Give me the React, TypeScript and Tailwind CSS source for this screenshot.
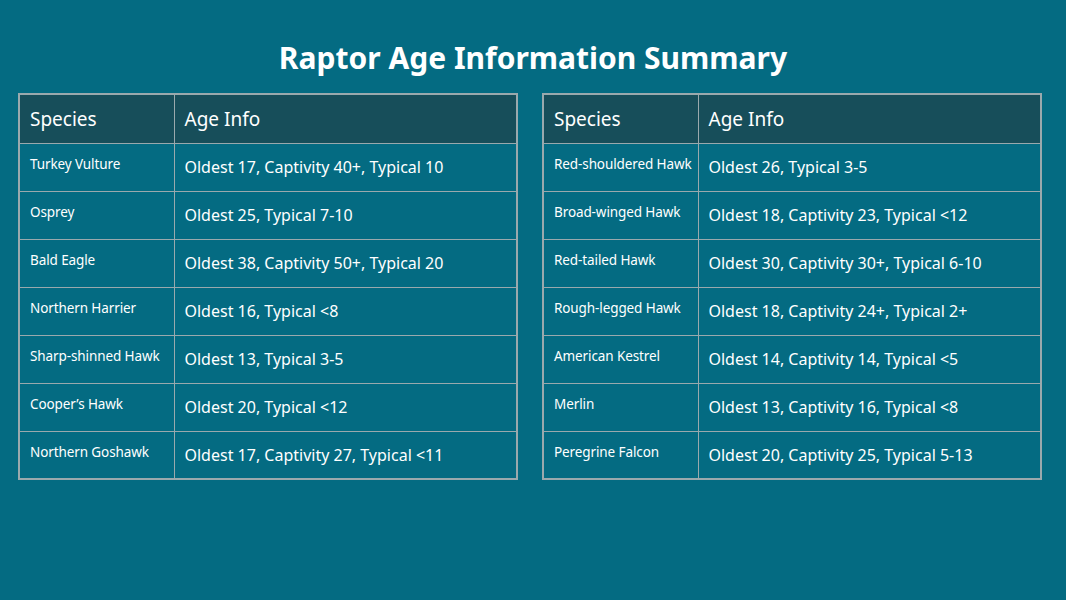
const left = [
  ["Turkey Vulture", "Oldest 17, Captivity 40+, Typical 10"],
  ["Osprey", "Oldest 25, Typical 7-10"],
  ["Bald Eagle", "Oldest 38, Captivity 50+, Typical 20"],
  ["Northern Harrier", "Oldest 16, Typical <8"],
  ["Sharp-shinned Hawk", "Oldest 13, Typical 3-5"],
  ["Cooper’s Hawk", "Oldest 20, Typical <12"],
  ["Northern Goshawk", "Oldest 17, Captivity 27, Typical <11"],
];
const right = [
  ["Red-shouldered Hawk", "Oldest 26, Typical 3-5"],
  ["Broad-winged Hawk", "Oldest 18, Captivity 23, Typical <12"],
  ["Red-tailed Hawk", "Oldest 30, Captivity 30+, Typical 6-10"],
  ["Rough-legged Hawk", "Oldest 18, Captivity 24+, Typical 2+"],
  ["American Kestrel", "Oldest 14, Captivity 14, Typical <5"],
  ["Merlin", "Oldest 13, Captivity 16, Typical <8"],
  ["Peregrine Falcon", "Oldest 20, Captivity 25, Typical 5-13"],
];

function Table({ rows }: { rows: string[][] }) {
  return (
    <table className="w-[500px] table-fixed border-collapse border-2 border-[#9aa9ad] text-white">
      <thead>
        <tr className="h-[49px] bg-[#174e5a] text-[19px]">
          <th className="w-[155px] border border-[#9aa9ad] px-[10px] text-left font-normal">Species</th>
          <th className="border border-[#9aa9ad] px-[10px] text-left font-normal">Age Info</th>
        </tr>
      </thead>
      <tbody>
        {rows.map(([s, a]) => (
          <tr key={s} className="h-[48px]">
            <td className="border border-[#9aa9ad] px-[10px] pb-[5px] text-[13.5px] tracking-[-0.1px] whitespace-nowrap">{s}</td>
            <td className="border border-[#9aa9ad] px-[10px] text-[16px] whitespace-nowrap">{a}</td>
          </tr>
        ))}
      </tbody>
    </table>
  );
}

export default function App() {
  return (
    <div className="h-[600px] w-[1066px] bg-[#046b82] font-['Open_Sans',sans-serif]">
      <h1 className="pt-[36px] text-center text-[30px] leading-[44px] font-bold text-white">
        Raptor Age Information Summary
      </h1>
      <div className="mt-[13px] flex gap-[24px] pl-[18px]">
        <Table rows={left} />
        <Table rows={right} />
      </div>
    </div>
  );
}
